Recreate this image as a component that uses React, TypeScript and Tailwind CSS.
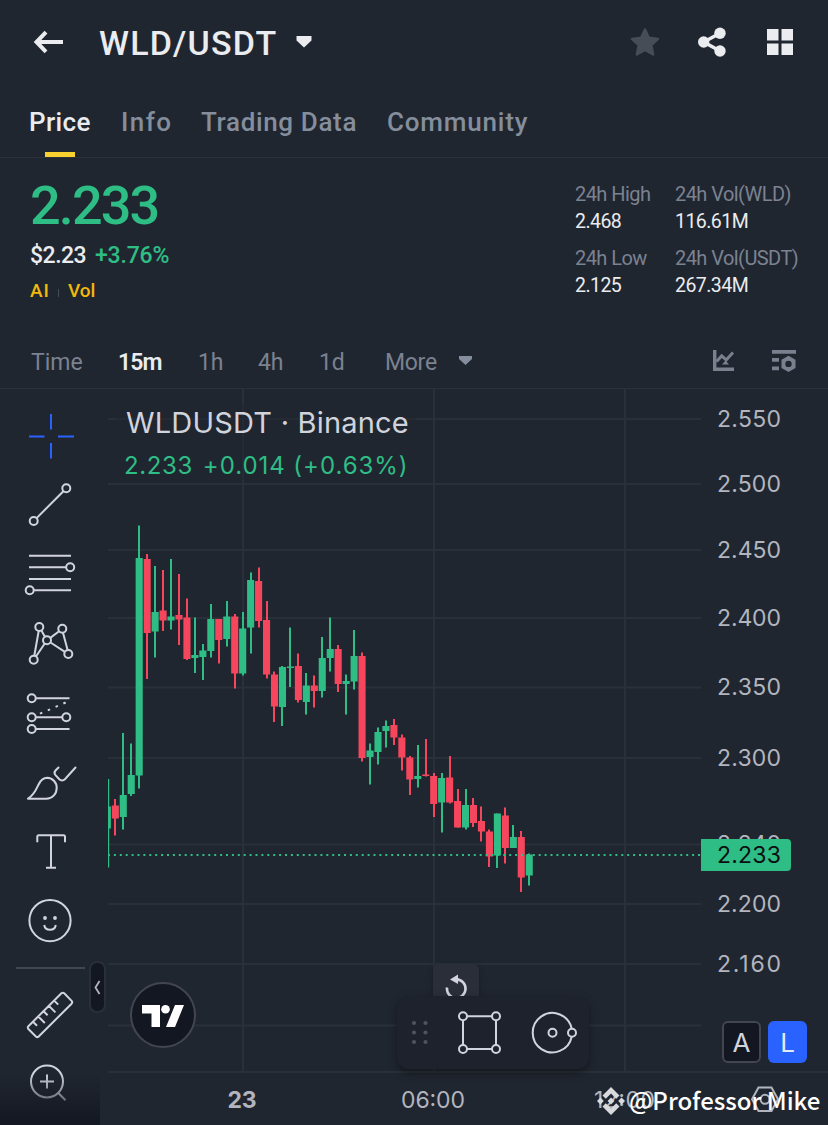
import React from "react";

type Candle = [up: 0 | 1, high: number, top: number, bottom: number, low: number];

const CANDLES: Candle[] = [
  [1, 779, 806.5, 828.5, 867.5],
  [0, 799, 805.5, 818.5, 835.5],
  [1, 733, 795, 817, 829.5],
  [1, 743.5, 775, 794, 796],
  [1, 525.5, 558, 775.5, 788.5],
  [0, 554, 559, 633, 679],
  [1, 566, 612, 631.5, 657.5],
  [0, 570, 610.5, 620.5, 631],
  [1, 559, 616.5, 620.5, 629.5],
  [0, 574, 615, 619.5, 645],
  [0, 598.5, 617.5, 659, 660],
  [1, 617.5, 655, 658, 673],
  [1, 644, 650.5, 657, 680],
  [1, 604, 619, 651, 657.5],
  [0, 619, 619, 640, 663.5],
  [1, 601, 616.5, 639, 646.5],
  [0, 614, 616.5, 673.5, 688.5],
  [1, 612, 628.5, 673.5, 675.5],
  [1, 572.5, 580, 627.5, 653.5],
  [0, 567.5, 581, 621, 627.5],
  [0, 601, 620, 674.5, 678.5],
  [0, 671.5, 674.5, 706.5, 722],
  [1, 666, 667, 707, 726],
  [1, 627.5, 666.5, 668, 687],
  [0, 653.5, 666, 700, 702.5],
  [1, 673, 685.5, 702, 714.5],
  [0, 675.5, 685.5, 691, 707.5],
  [1, 637, 658, 691, 697.5],
  [1, 617.5, 649, 658, 671.5],
  [0, 645, 649, 684, 692],
  [1, 674.5, 681, 684, 714.5],
  [1, 630, 656, 681.5, 689.5],
  [0, 652.5, 656, 758, 761.5],
  [1, 743.5, 750.5, 757, 784.5],
  [1, 727.5, 732, 752, 764.5],
  [1, 720.5, 726, 731, 747.5],
  [0, 719, 725, 737.5, 745],
  [0, 734.5, 737.5, 757.5, 770.5],
  [0, 756, 757.5, 779.5, 795],
  [1, 745, 776, 779, 787.5],
  [0, 739, 774.5, 776, 776.5],
  [0, 773, 776, 804, 817],
  [1, 773, 778, 802.5, 832.5],
  [0, 756, 777.5, 802.5, 803.5],
  [0, 789, 801, 827.5, 827.5],
  [1, 789, 805, 827.5, 829.5],
  [0, 798, 805, 823, 827],
  [0, 806.5, 821, 831.5, 841.5],
  [0, 829.5, 831.5, 856.5, 867],
  [1, 813.5, 813.5, 855.5, 868],
  [0, 807.5, 815.5, 848, 863.5],
  [1, 825, 837, 848, 848],
  [0, 831, 837, 877.5, 892],
  [1, 853.5, 854.5, 875.5, 885.5],
];

const GRID_Y = [419, 484, 550, 618, 687.5, 758, 844.5, 904, 964, 1025.5];
const GRID_X = [243, 434, 625];
const PRICES: [string, number][] = [
  ["2.550", 419],
  ["2.500", 484],
  ["2.450", 550],
  ["2.400", 618],
  ["2.350", 687],
  ["2.300", 758],
  ["2.240", 844],
  ["2.200", 904],
  ["2.160", 964],
];

function Chart() {
  return (
    <svg width="720" height="736" viewBox="108 389 720 736" className="block shrink-0 font-['Inter',sans-serif]">
      <g stroke="#2a3039" strokeWidth="2">
        {GRID_Y.map((y) => (
          <line key={y} x1="108" x2="701" y1={y} y2={y} />
        ))}
        {GRID_X.map((x) => (
          <line key={x} x1={x} x2={x} y1="389" y2="1071" />
        ))}
        <line x1="108" x2="828" y1="1072" y2="1072" />
      </g>
      <rect x="116" y="404" width="300" height="76" fill="#202630" opacity="0.5" />
      {CANDLES.map(([up, high, top, bottom, low], i) => {
        const x = 107.3 + i * 7.96;
        const color = up ? "#2ebd85" : "#f6465d";
        return (
          <g key={i} fill={color}>
            <rect x={Math.max(Math.round(x) - 1, 107.2)} y={high} width="2" height={low - high} />
            <rect x={x - 3.5} y={top} width="7.1" height={Math.max(bottom - top, 1.5)} />
          </g>
        );
      })}
      <line x1="108" x2="701" y1="855" y2="855" stroke="#2ebd85" strokeWidth="2" strokeDasharray="2 3.9" />
      <g fill="#b2b5be" fontSize="23">
        {PRICES.map(([label, y]) => (
          <text key={label} x="717" y={y + 8} textLength="64">
            {label}
          </text>
        ))}
        <text x="227.500" y="1108" fontWeight="700" textLength="29">
          23
        </text>
        <text x="401" y="1108" textLength="64">
          06:00
        </text>
        <text x="594" y="1108" textLength="61">
          12:00
        </text>
      </g>
      <path d="M701 839h86a4 4 0 0 1 4 4v24a4 4 0 0 1-4 4h-86z" fill="#2ebd85" />
      <text x="717" y="863" fontSize="23" fill="#0c0e12" textLength="64">
        2.233
      </text>
      <g fill="none" stroke="#b2b5be" strokeWidth="2">
        <path d="M758.500 1087.500h13l6.500 11.800-6.500 11.800h-13l-6.500-11.800z" />
        <circle cx="765" cy="1099.300" r="4.500" />
      </g>
    </svg>
  );
}

function Tool({ children }: { children: React.ReactNode }) {
  return (
    <svg
      width="100"
      height="69"
      viewBox="0 0 100 69"
      fill="none"
      stroke="#d1d4dc"
      strokeWidth="2"
      className="block shrink-0"
    >
      {children}
    </svg>
  );
}

function DrawingTools() {
  return (
    <div className="relative flex h-[736px] w-[108px] shrink-0 flex-col pt-[13px]">
      <Tool>
        <path d="M51 12v15.500M51 41v15.500M29 34.500h15.500M58 34.500h16" stroke="#2962ff" strokeWidth="2" />
      </Tool>
      <Tool>
        <circle cx="66.300" cy="17.300" r="4" />
        <circle cx="33.700" cy="50" r="4" />
        <path d="M36.600 47.100l26.800-26.900" />
      </Tool>
      <Tool>
        <path d="M29 15.700h42M29 27.300h37M29 39h42M34 50.300h37" />
        <circle cx="70.200" cy="27.300" r="4" />
        <circle cx="29.700" cy="50.300" r="4" />
      </Tool>
      <Tool>
        <circle cx="39.300" cy="18" r="4" />
        <circle cx="62.300" cy="19.700" r="4" />
        <circle cx="47" cy="31.300" r="4" />
        <circle cx="33.700" cy="50.700" r="4" />
        <circle cx="68.300" cy="45" r="4" />
        <path d="M38.700 22l-4.400 24.700M41.400 21.500l3.500 6.300M44.600 34.700l-8.500 12.600M50.300 28.900l8.800-6.700M50.500 33.500l14.400 9.300M63 23.700l4.600 17.300" />
      </Tool>
      <Tool>
        <path d="M36 20.300h33.500M36 39.300h26M36 51h33.500" />
        <circle cx="31.700" cy="20.300" r="4" />
        <circle cx="31.700" cy="39.300" r="4" />
        <circle cx="66.300" cy="39.300" r="4" />
        <circle cx="31.700" cy="51" r="4" />
        <path d="M40 35.700L67.500 23.700" strokeDasharray="2.500 6" strokeWidth="2" />
      </Tool>
      <Tool>
        <path
          d="M28 51.700C34 48 36 43 38.300 38c2-4.500 5-7.200 9-7.200a9.800 9.800 0 0 1 9.400 10.200c0 6-4.500 10.700-10.400 10.700z"
          strokeLinejoin="round"
        />
        <path
          d="M58.500 20.500l-3 3c-1.300 1.500-1.300 3.200 0 4.700l3.800 4c1.600 1.600 4 1.600 5.600 0L75.500 20.500"
          strokeLinecap="round"
        />
      </Tool>
      <Tool>
        <path d="M37.300 26.300v-5.500q0-1.500 1.500-1.500h24.700q1.500 0 1.500 1.500v5.500M51 19.300v32.300M46 51.700h10" />
      </Tool>
      <Tool>
        <circle cx="50" cy="35.600" r="20.600" />
        <circle cx="45" cy="33" r="1.900" fill="#d1d4dc" stroke="none" />
        <circle cx="55" cy="33" r="1.900" fill="#d1d4dc" stroke="none" />
        <path d="M44.200 40c1 6.300 10.600 6.300 11.600 0" />
      </Tool>
      <div className="mt-[13px] mb-[12px] ml-4 h-[2px] w-[69px] shrink-0 bg-[#434651]" />
      <Tool>
        <path
          d="M61.400 12.300q1.400-1.200 2.800 0l7.400 7.600q1.200 1.400 0 2.800L38.700 55.500q-1.400 1.200-2.800 0l-7.500-7.500q-1.200-1.400 0-2.800zM33 40.800l4 4M38.300 35.500l6.500 6.500M43.600 30.200l4 4M48.900 24.900l6.500 6.500M54.200 19.600l4 4"
          strokeLinejoin="round"
        />
      </Tool>
      <Tool>
        <circle cx="47" cy="31.500" r="16" />
        <path d="M40 31.500h14M47 24.500v14M58.300 43l7.200 7.200" />
      </Tool>
      <div className="absolute bottom-0 left-0 h-[52px] w-[100px] bg-gradient-to-b from-[#131722]/0 to-[#131722]" />
      <div className="absolute top-[572px] left-[89px] flex h-[52px] w-[17px] items-center justify-center rounded-[8px] border-2 border-[#2a2e39] bg-[#131722]">
        <svg width="7" height="15" viewBox="0 0 7 15" fill="none" stroke="#b2b5be" strokeWidth="1.800">
          <path d="M5.500 1L1.500 7.500l4 6.500" />
        </svg>
      </div>
    </div>
  );
}

function ShapeBar() {
  return (
    <>
      <div className="absolute top-[575px] left-[433px] flex h-[44px] w-[46px] justify-center rounded-t-[6px] bg-[#2a2e39] shadow-[0_2px_6px_rgba(0,0,0,0.3)]">
        <svg width="24" height="30" viewBox="0 0 24 30" fill="none" className="mt-[9px]">
          <path d="M3 14.500A9.300 9.300 0 1 0 12.500 6.400" stroke="#d1d4dc" strokeWidth="2.600" />
          <path d="M14 1.500v9.500L6 6.500z" fill="#d1d4dc" />
        </svg>
      </div>
      <div className="absolute top-[607px] left-[397px] flex h-[73px] w-[192px] items-center rounded-[12px] bg-[#1e222d] shadow-[0_4px_10px_rgba(0,0,0,0.4)]">
        <svg width="192" height="73" viewBox="0 0 192 73" fill="none" stroke="#d1d4dc" strokeWidth="2">
          <g fill="#50535e" stroke="none">
            <circle cx="17" cy="27" r="2.100" />
            <circle cx="28.500" cy="27" r="2.100" />
            <circle cx="17" cy="36.500" r="2.100" />
            <circle cx="28.500" cy="36.500" r="2.100" />
            <circle cx="17" cy="46" r="2.100" />
            <circle cx="28.500" cy="46" r="2.100" />
          </g>
          <path d="M70 20.300h25M70 53h25M66 24.300v24.600M99 24.300v24.600" />
          <circle cx="66" cy="20.300" r="4" />
          <circle cx="99" cy="20.300" r="4" />
          <circle cx="66" cy="53" r="4" />
          <circle cx="99" cy="53" r="4" />
          <path d="M174.700 32.700a19.700 19.700 0 1 0 0 8" />
          <circle cx="155.500" cy="36.700" r="4" />
          <circle cx="175" cy="36.700" r="4" />
        </svg>
      </div>
    </>
  );
}

function Stat({ label, value, width }: { label: string; value: string; width: string }) {
  return (
    <div className={width}>
      <div className="h-[27px] text-[20px] leading-[27px] tracking-[-0.560px] whitespace-nowrap text-[#7b8290]">
        {label}
      </div>
      <div className="h-[27px] text-[19.500px] leading-[27px] tracking-[-0.550px] whitespace-nowrap text-[#eaecef]">
        {value}
      </div>
    </div>
  );
}

export default function App() {
  return (
    <div className="flex h-[1125px] w-[828px] flex-col overflow-hidden bg-[#202630] font-['Roboto',sans-serif] text-[#eaecef]">
      <header className="flex h-[84px] shrink-0 items-center pl-[33px]">
        <svg width="30" height="24" viewBox="0 0 30 24" fill="none" stroke="#eaecef" strokeWidth="4">
          <path d="M30 12H4M13 2.200L3.500 12l9.500 9.800" />
        </svg>
        <h1 className="ml-[36px] w-[197px] pt-[1px] text-[34px] leading-[40px] font-medium tracking-[1.200px] whitespace-nowrap">
          WLD/USDT
        </h1>
        <svg width="16" height="12" viewBox="0 0 16 12" fill="#eaecef">
          <path d="M.500 0h15v4.500L8 11.500.500 4.500z" />
        </svg>
        <svg width="30" height="30" viewBox="0 0 30 30" className="ml-[318px]">
          <path
            d="M15 2.500l3.800 8.300 9.200 1.100-6.700 6.300 1.800 9.300L15 23l-8.100 4.500 1.800-9.300L2 11.900l9.200-1.100z"
            fill="#474d57"
            stroke="#474d57"
            strokeWidth="2.500"
            strokeLinejoin="round"
          />
        </svg>
        <svg width="28" height="30" viewBox="0 0 28 30" fill="#eaecef" stroke="#eaecef" className="ml-[38px]">
          <g stroke="none">
            <circle cx="5.700" cy="15" r="5.700" />
            <circle cx="22" cy="6.200" r="5.700" />
            <circle cx="22" cy="24" r="5.700" />
          </g>
          <path d="M22 6.200L5.700 15 22 24" fill="none" strokeWidth="3.500" />
        </svg>
        <svg width="26" height="26" viewBox="0 0 26 26" fill="#eaecef" className="ml-[41px]">
          <path d="M0 0h11.500v11.500H0zM14.500 0H26v11.500H14.500zM0 14.500h11.500V26H0zM14.500 14.500H26V26H14.500z" />
        </svg>
      </header>

      <nav className="flex h-[74px] shrink-0 border-b border-[#2b313b] pl-[29px] text-[26px] leading-[30px] font-medium whitespace-nowrap text-[#848e9c]">
        <div className="relative w-[92px] pt-[23px] tracking-[0.400px] text-[#eaecef]">
          Price
          <div className="absolute bottom-0 left-4 h-[5px] w-[30px] bg-[#f8d12f]" />
        </div>
        <div className="w-[80px] pt-[23px] tracking-[1.400px]">Info</div>
        <div className="w-[186px] pt-[23px] tracking-[0.650px]">Trading Data</div>
        <div className="pt-[23px] tracking-[0.800px]">Community</div>
      </nav>

      <section className="flex h-[174px] shrink-0 pl-[30px]">
        <div className="w-[545px] pt-[16px]">
          <div className="h-[66px] text-[54px] leading-[64px] font-medium tracking-[-1.900px] text-[#2ebd85]">2.233</div>
          <div className="flex h-[30px] text-[23px] leading-[32px] font-medium whitespace-nowrap">
            <span className="w-[65px] tracking-[-0.500px]">$2.23</span>
            <span className="tracking-[-0.200px] text-[#2ebd85]">+3.76%</span>
          </div>
          <div className="mt-[7px] flex h-[28px] items-center text-[19px] leading-[28px] font-medium text-[#f0b90b]">
            <span className="w-[28px] tracking-[0.900px]">AI</span>
            <span className="mt-[3px] mr-[9px] h-[8px] w-px bg-[#474d57]" />
            <span>Vol</span>
          </div>
        </div>
        <div className="pt-[23px]">
          <div className="flex h-[64px]">
            <Stat width="w-[100px]" label="24h High" value="2.468" />
            <Stat width="w-[140px]" label="24h Vol(WLD)" value="116.61M" />
          </div>
          <div className="flex h-[64px]">
            <Stat width="w-[100px]" label="24h Low" value="2.125" />
            <Stat width="w-[140px]" label="24h Vol(USDT)" value="267.34M" />
          </div>
        </div>
      </section>

      <div className="flex h-[57px] shrink-0 items-center border-b border-[#2b313b] pl-[31px] text-[23px] leading-[30px] whitespace-nowrap text-[#7b8290]">
        <span className="w-[87px] pt-[5px]">Time</span>
        <span className="w-[80px] pt-[5px] font-semibold tracking-[-0.900px] text-[#eaecef]">15m</span>
        <span className="w-[60px] pt-[5px] tracking-[-0.300px]">1h</span>
        <span className="w-[61px] pt-[5px] tracking-[-0.300px]">4h</span>
        <span className="w-[66px] pt-[5px] tracking-[-0.300px]">1d</span>
        <span className="w-[74px] pt-[5px] tracking-[-0.300px]">More</span>
        <svg width="13" height="9" viewBox="0 0 13 9" fill="#848e9c">
          <path d="M0 0h13v3L6.500 9 0 3z" />
        </svg>
        <svg width="22" height="22" viewBox="0 0 22 22" fill="none" stroke="#7a818e" strokeWidth="3.400" className="mt-[2px] ml-[241px]">
          <path d="M1.700 0v20M0 19.300h21" />
          <path d="M3.500 11.500l5.200-5.600 4.500 4L20 2.500" strokeWidth="3" />
          <path d="M9 14.500l3.500-4 3.500 4z" fill="#7a818e" stroke="none" />
        </svg>
        <svg width="24" height="24" viewBox="0 0 24 24" fill="#7a818e" className="mt-[2px] ml-[37px]">
          <path d="M0 1h24v3.800H0zM0 9h7v3.800H0zM0 17.500h7v3.800H0z" />
          <path
            fillRule="evenodd"
            d="M16.500 6.800l7 4v8.200l-7 4-7-4v-8.200zM16.500 11.700a3.200 3.200 0 1 0 0 6.400 3.200 3.200 0 0 0 0-6.400z"
          />
        </svg>
      </div>

      <main className="relative flex h-[736px] shrink-0 font-['Inter',sans-serif]">
        <DrawingTools />
        <Chart />
        <div className="absolute top-[14px] left-[126px] whitespace-nowrap">
          <div className="h-[40px] text-[29px] leading-[39px] tracking-[0.200px] text-[#d1d4dc]">WLDUSDT · Binance</div>
          <div className="-ml-[2px] flex h-[36px] gap-[10px] pt-[5px] text-[24px] leading-[36px] text-[#2ebd85]">
            <span className="tracking-[0.600px]">2.233</span>
            <span className="tracking-[0.950px]">+0.014 (+0.63%)</span>
          </div>
        </div>
        <div className="absolute top-[593px] left-[130px] flex size-[66px] items-center justify-center rounded-full border-2 border-[#434651] bg-[#131722]">
          <svg width="42" height="22" viewBox="0 0 42 22" fill="#fff" className="mt-[2px]">
            <path d="M0 0h18v22H9.500V8.500H0zM33 0h9l-9 22h-9z" />
            <circle cx="23.500" cy="4.300" r="4.300" />
          </svg>
        </div>
        <ShapeBar />
        <div className="absolute top-[632px] left-[722px] flex gap-[7px] text-[26px]">
          <div className="flex h-[42px] w-[39px] items-center justify-center rounded-[6px] border-2 border-[#434651] bg-[#131722] text-[#d1d4dc]">
            A
          </div>
          <div className="flex h-[42px] w-[39px] items-center justify-center rounded-[6px] bg-[#2962ff] text-[#e4e9f7]">L</div>
        </div>
        <div className="absolute top-[694px] left-[597px] flex items-center">
          <svg width="28" height="28" viewBox="0 0 28 28" fill="#d9dadd">
            <path d="M14 0l8.500 8.500-3.300 3.300L14 6.600l-5.200 5.200-3.300-3.300zM14 28l-8.500-8.500 3.300-3.300 5.200 5.200 5.200-5.200 3.300 3.300zM14 10.600l3.400 3.400-3.400 3.400-3.400-3.400zM3.400 10.600L6.800 14l-3.400 3.400L0 14zM24.600 10.600L28 14l-3.400 3.400-3.400-3.400z" />
          </svg>
          <span className="mb-[3px] ml-[4px] font-['Noto_Sans_CJK_SC',sans-serif] text-[24px] leading-[33px] font-medium whitespace-nowrap text-white">
            @Professor Mike
          </span>
        </div>
      </main>
    </div>
  );
}
